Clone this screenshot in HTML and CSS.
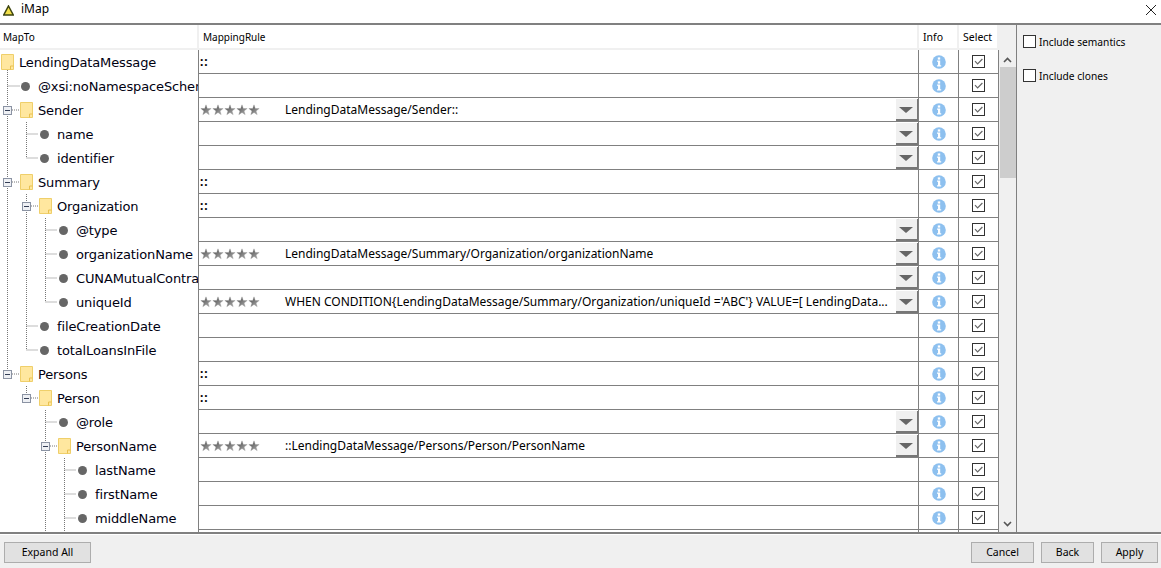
FILE: index.html
```html
<!DOCTYPE html>
<html lang="en">
<head>
<meta charset="utf-8">
<title>iMap</title>
<link rel="stylesheet" href="styles.css">
</head>
<body>
<svg class="defs" width="0" height="0" aria-hidden="true">
  <defs>
    <linearGradient id="sg" x1="0" y1="0" x2="1" y2="1"><stop offset="0" stop-color="#444"/><stop offset="1" stop-color="#b4b4b4"/></linearGradient>
    <symbol id="stars" viewBox="0 0 60 12">
      <g fill="url(#sg)" stroke="#8a8a8a" stroke-width=".3">
        <path id="st" d="M6 .8l1.3 3.7 3.9.1-3.1 2.3 1.1 3.8L6 8.5l-3.2 2.2 1.1-3.8L.8 4.6l3.9-.1z"/>
        <use href="#st" x="12"/><use href="#st" x="24"/><use href="#st" x="36"/><use href="#st" x="48"/>
      </g>
    </symbol>
    <symbol id="folder" viewBox="0 0 13 16">
      <path d="M.5.5h12v15H.5z" fill="#ffe79f" stroke="#efcf6a"/>
      <path d="M9.5 15.5v-3.5h3" fill="none" stroke="#e9c04f"/>
    </symbol>
    <symbol id="info" viewBox="0 0 14 14">
      <circle cx="7" cy="7" r="6.8" fill="#8dc0ef"/>
      <rect x="5.8" y="2.4" width="2.4" height="2.2" fill="#fff"/>
      <path d="M5 5.6h3.2v4.6h1v1.2H5v-1.2h1V6.8H5z" fill="#fff"/>
    </symbol>
    <symbol id="check" viewBox="0 0 13 13">
      <rect x=".5" y=".5" width="12" height="12" fill="#fff" stroke="#333"/>
      <path d="M3 6.2l2.6 2.6L10.4 4" fill="none" stroke="#666" stroke-width="1.2"/>
    </symbol>
    <symbol id="minus" viewBox="0 0 9 9">
      <rect x=".5" y=".5" width="8" height="8" fill="#eef0f4" stroke="#8b93a3"/>
      <path d="M2 4.5h5" stroke="#333d55"/>
    </symbol>
  </defs>
</svg>

<header class="titlebar">
  <svg class="app-icon" width="11" height="11" viewBox="0 0 11 11"><path d="M5.5 1L10.3 10H.7z" fill="#f3e04a" stroke="#3d4410" stroke-width="1.5"/></svg>
  <span class="app-name">iMap</span>
  <svg class="close" width="12" height="12" viewBox="0 0 12 12"><path d="M1 1l10 10M11 1L1 11" stroke="#222" stroke-width="1"/></svg>
</header>

<main class="content">
  <section class="table">
    <div class="thead">
      <div class="th c-map">MapTo</div>
      <div class="th c-rule">MappingRule</div>
      <div class="th c-info">Info</div>
      <div class="th c-sel">Select</div>
      <div class="th-fill"></div>
    </div>
    <div class="tbody">
      <div class="rows">
        <svg class="guides" width="198" height="484" viewBox="0 0 198 484">
          <path d="M7.5 16V325M7.5 36H20M12 60H19M12 132H19M12 324H19
                   M26.5 72V108M26.5 84H38M26.5 108H38
                   M26.5 144V300M31 156H38M26.5 276H38M26.5 300H38
                   M45.5 168V252M45.5 180H57M45.5 204H57M45.5 228H57M45.5 252H57
                   M26.5 336V349M31 348H38
                   M45.5 360V484M45.5 372H57M50 396H57
                   M64.5 408V484M64.5 420H76M64.5 444H76M64.5 468H76" fill="none" stroke="#777" stroke-dasharray="1 1"/>
        </svg>

        <div class="row"><div class="map l0"><svg class="ico-f"><use href="#folder"/></svg><span>LendingDataMessage</span></div><div class="rule"><span class="plain">::</span></div><div class="cinfo"><svg class="i"><use href="#info"/></svg></div><div class="csel"><svg class="k"><use href="#check"/></svg></div></div>

        <div class="row"><div class="map l1 leaf"><i class="dot"></i><span>@xsi:noNamespaceSchemaLocation</span></div><div class="rule"></div><div class="cinfo"><svg class="i"><use href="#info"/></svg></div><div class="csel"><svg class="k"><use href="#check"/></svg></div></div>

        <div class="row"><div class="map l1"><svg class="ico-m"><use href="#minus"/></svg><svg class="ico-f"><use href="#folder"/></svg><span>Sender</span></div><div class="rule"><svg class="stars"><use href="#stars"/></svg><span class="expr">LendingDataMessage/Sender::</span><button class="drop"></button></div><div class="cinfo"><svg class="i"><use href="#info"/></svg></div><div class="csel"><svg class="k"><use href="#check"/></svg></div></div>

        <div class="row"><div class="map l2 leaf"><i class="dot"></i><span>name</span></div><div class="rule"><button class="drop"></button></div><div class="cinfo"><svg class="i"><use href="#info"/></svg></div><div class="csel"><svg class="k"><use href="#check"/></svg></div></div>

        <div class="row"><div class="map l2 leaf"><i class="dot"></i><span>identifier</span></div><div class="rule"><button class="drop"></button></div><div class="cinfo"><svg class="i"><use href="#info"/></svg></div><div class="csel"><svg class="k"><use href="#check"/></svg></div></div>

        <div class="row"><div class="map l1"><svg class="ico-m"><use href="#minus"/></svg><svg class="ico-f"><use href="#folder"/></svg><span>Summary</span></div><div class="rule"><span class="plain">::</span></div><div class="cinfo"><svg class="i"><use href="#info"/></svg></div><div class="csel"><svg class="k"><use href="#check"/></svg></div></div>

        <div class="row"><div class="map l2"><svg class="ico-m"><use href="#minus"/></svg><svg class="ico-f"><use href="#folder"/></svg><span>Organization</span></div><div class="rule"><span class="plain">::</span></div><div class="cinfo"><svg class="i"><use href="#info"/></svg></div><div class="csel"><svg class="k"><use href="#check"/></svg></div></div>

        <div class="row"><div class="map l3 leaf"><i class="dot"></i><span>@type</span></div><div class="rule"><button class="drop"></button></div><div class="cinfo"><svg class="i"><use href="#info"/></svg></div><div class="csel"><svg class="k"><use href="#check"/></svg></div></div>

        <div class="row"><div class="map l3 leaf"><i class="dot"></i><span>organizationName</span></div><div class="rule"><svg class="stars"><use href="#stars"/></svg><span class="expr">LendingDataMessage/Summary/Organization/organizationName</span><button class="drop"></button></div><div class="cinfo"><svg class="i"><use href="#info"/></svg></div><div class="csel"><svg class="k"><use href="#check"/></svg></div></div>

        <div class="row"><div class="map l3 leaf"><i class="dot"></i><span>CUNAMutualContractNumber</span></div><div class="rule"><button class="drop"></button></div><div class="cinfo"><svg class="i"><use href="#info"/></svg></div><div class="csel"><svg class="k"><use href="#check"/></svg></div></div>

        <div class="row"><div class="map l3 leaf"><i class="dot"></i><span>uniqueId</span></div><div class="rule"><svg class="stars"><use href="#stars"/></svg><span class="expr">WHEN CONDITION{LendingDataMessage/Summary/Organization/uniqueId ='ABC'} VALUE=[ LendingData...</span><button class="drop"></button></div><div class="cinfo"><svg class="i"><use href="#info"/></svg></div><div class="csel"><svg class="k"><use href="#check"/></svg></div></div>

        <div class="row"><div class="map l2 leaf"><i class="dot"></i><span>fileCreationDate</span></div><div class="rule"></div><div class="cinfo"><svg class="i"><use href="#info"/></svg></div><div class="csel"><svg class="k"><use href="#check"/></svg></div></div>

        <div class="row"><div class="map l2 leaf"><i class="dot"></i><span>totalLoansInFile</span></div><div class="rule"></div><div class="cinfo"><svg class="i"><use href="#info"/></svg></div><div class="csel"><svg class="k"><use href="#check"/></svg></div></div>

        <div class="row"><div class="map l1"><svg class="ico-m"><use href="#minus"/></svg><svg class="ico-f"><use href="#folder"/></svg><span>Persons</span></div><div class="rule"><span class="plain">::</span></div><div class="cinfo"><svg class="i"><use href="#info"/></svg></div><div class="csel"><svg class="k"><use href="#check"/></svg></div></div>

        <div class="row"><div class="map l2"><svg class="ico-m"><use href="#minus"/></svg><svg class="ico-f"><use href="#folder"/></svg><span>Person</span></div><div class="rule"><span class="plain">::</span></div><div class="cinfo"><svg class="i"><use href="#info"/></svg></div><div class="csel"><svg class="k"><use href="#check"/></svg></div></div>

        <div class="row"><div class="map l3 leaf"><i class="dot"></i><span>@role</span></div><div class="rule"><button class="drop"></button></div><div class="cinfo"><svg class="i"><use href="#info"/></svg></div><div class="csel"><svg class="k"><use href="#check"/></svg></div></div>

        <div class="row"><div class="map l3"><svg class="ico-m"><use href="#minus"/></svg><svg class="ico-f"><use href="#folder"/></svg><span>PersonName</span></div><div class="rule"><svg class="stars"><use href="#stars"/></svg><span class="expr">::LendingDataMessage/Persons/Person/PersonName</span><button class="drop"></button></div><div class="cinfo"><svg class="i"><use href="#info"/></svg></div><div class="csel"><svg class="k"><use href="#check"/></svg></div></div>

        <div class="row"><div class="map l4 leaf"><i class="dot"></i><span>lastName</span></div><div class="rule"></div><div class="cinfo"><svg class="i"><use href="#info"/></svg></div><div class="csel"><svg class="k"><use href="#check"/></svg></div></div>

        <div class="row"><div class="map l4 leaf"><i class="dot"></i><span>firstName</span></div><div class="rule"></div><div class="cinfo"><svg class="i"><use href="#info"/></svg></div><div class="csel"><svg class="k"><use href="#check"/></svg></div></div>

        <div class="row"><div class="map l4 leaf"><i class="dot"></i><span>middleName</span></div><div class="rule"></div><div class="cinfo"><svg class="i"><use href="#info"/></svg></div><div class="csel"><svg class="k"><use href="#check"/></svg></div></div>

        <div class="row"><div class="map l4 leaf"></div><div class="rule"></div><div class="cinfo"></div><div class="csel"></div></div>
      </div>
      <div class="scrollbar">
        <svg class="sb-arrow" width="9" height="6" viewBox="0 0 9 6"><path d="M1 5l3.5-3.5L8 5" fill="none" stroke="#555" stroke-width="1.6"/></svg>
        <div class="sb-track"><div class="sb-thumb"></div></div>
        <svg class="sb-arrow" width="9" height="6" viewBox="0 0 9 6"><path d="M1 1l3.5 3.5L8 1" fill="none" stroke="#555" stroke-width="1.6"/></svg>
      </div>
    </div>
  </section>
  <aside class="side">
    <label class="opt"><span class="box"></span>Include semantics</label>
    <label class="opt"><span class="box"></span>Include clones</label>
  </aside>
</main>

<footer class="footer">
  <button class="btn btn-expand">Expand All</button>
  <div class="spacer"></div>
  <button class="btn btn-cancel">Cancel</button>
  <button class="btn btn-back">Back</button>
  <button class="btn btn-apply">Apply</button>
</footer>
</body>
</html>
```

FILE: styles.css
```css
* { box-sizing: border-box; }
html, body { margin: 0; height: 100%; }
body {
  width: 1161px; height: 568px; overflow: hidden;
  display: flex; flex-direction: column;
  background: #f0f0f0; color: #000;
  font-family: "Noto Sans", sans-serif; font-size: 11px;
}
.defs { position: absolute; }

.titlebar {
  height: 25px; flex: none; display: flex; align-items: center;
  background: #fff; border-bottom: 2px solid #808080;
  padding: 0 4px 3px 3px;
}
.app-icon { margin-right: 7px; }
.app-name { font-size: 12px; line-height: 14px; margin-bottom: 2px; }
.close { margin-left: auto; }

.content { height: 509px; flex: none; display: flex; border-bottom: 2px solid #808080; }
.table { width: 1017px; flex: none; display: flex; flex-direction: column; border-right: 1px solid #808080; overflow: hidden; }

.thead { height: 25px; flex: none; display: flex; background: #fff; border-bottom: 2px solid #f0f0f0; }
.th { font-size: 10.5px; line-height: 25px; border-right: 2px solid #f0f0f0; padding-left: 4px; white-space: nowrap; }
.th.c-map { width: 199px; padding-left: 3px; font-size: 10px; }
.th.c-rule { width: 720px; font-size: 10px; }
.th.c-info { width: 40px; }
.th.c-sel { width: 40px; }
.th-fill { flex: 1; background: #f0f0f0; }

.tbody { flex: 1; display: flex; min-height: 0; }
.rows { width: 999px; flex: none; position: relative; background: #fff; overflow: hidden; }
.guides { position: absolute; left: 0; top: 0; pointer-events: none; }

.row { height: 24px; display: flex; }
.map {
  width: 198px; flex: none; display: flex; align-items: center;
  overflow: hidden; white-space: nowrap;
  font-family: "DejaVu Sans", sans-serif;
  font-size: 13px; letter-spacing: -.14px; color: #001;
  position: relative;
}
.l0 { padding-left: 1px; }
.l1 { padding-left: 3px; }
.l2 { padding-left: 22px; }
.l3 { padding-left: 41px; }
.l4 { padding-left: 60px; }
.leaf.l1 { padding-left: 21px; }
.leaf.l2 { padding-left: 40px; }
.leaf.l3 { padding-left: 59px; }
.leaf.l4 { padding-left: 78px; }

.ico-m { width: 9px; height: 9px; flex: none; margin-right: 8px; background: #fff; }
.ico-f { width: 13px; height: 16px; flex: none; margin-right: 5px; background: #fff; }
.dot { width: 9px; height: 9px; flex: none; border-radius: 50%; background: #666; margin-right: 8px; }

.rule {
  width: 720px; flex: none; display: flex; align-items: center;
  border-left: 1px solid #808080; border-bottom: 1px solid #808080;
  position: relative; white-space: nowrap; overflow: hidden;
  font-size: 12px;
}
.plain { padding-left: 1px; font-weight: bold; letter-spacing: 1px; }
.stars { width: 60px; height: 12px; flex: none; margin-left: 1px; }
.expr { margin-left: 25px; }
.drop {
  position: absolute; right: 0; top: 1px; width: 22px; height: 22px; padding: 0;
  background: #f0f0f0; border: 0; border-right: 1px solid #777; border-bottom: 2px solid #777;
}
.drop::after {
  content: ""; display: block; margin: 1px 0 0 3px; width: 0; height: 0;
  border-left: 7px solid transparent; border-right: 7px solid transparent; border-top: 6px solid #666;
}

.cinfo, .csel {
  width: 40px; flex: none; display: flex; align-items: center; justify-content: center;
  border-left: 1px solid #808080; border-bottom: 1px solid #808080;
}
.csel { border-right: 1px solid #808080; width: 41px; }
.i { width: 14px; height: 14px; }
.k { width: 13px; height: 13px; }

.scrollbar { flex: 1; display: flex; flex-direction: column; align-items: center; background: #f0f0f0; padding: 7px 0 5px; }
.sb-arrow { flex: none; }
.sb-track { flex: 1; width: 100%; padding: 4px 0 0 1px; }
.sb-thumb { height: 111px; background: #cdcdcd; }

.side { flex: 1; padding: 8px 0 0 6px; display: flex; flex-direction: column; gap: 17px; background: #f0f0f0; }
.opt { display: flex; align-items: center; height: 17px; font-size: 10.2px; }
.box { width: 13px; height: 13px; background: #fff; border: 1px solid #333; margin-right: 3px; }

.footer { height: 34px; flex: none; display: flex; align-items: flex-start; padding: 7px 3px 0 4px; background: #f0f0f0; border-top: 1px solid #fff; gap: 7px; }
.spacer { flex: 1; }
.btn { height: 21px; padding: 0 0 2px; background: #e1e1e1; border: 1px solid #adadad; font-family: "Noto Sans", sans-serif; font-size: 10.5px; color: #000; }
.btn-expand { width: 87px; }
.btn-cancel { width: 63px; }
.btn-back { width: 53px; }
.btn-apply { width: 57px; }
```
